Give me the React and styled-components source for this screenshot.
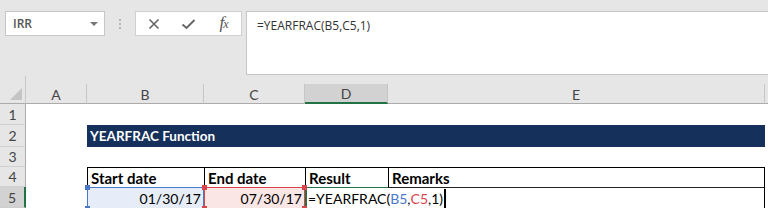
import React from 'react';
import styled, { createGlobalStyle } from 'styled-components';

const GlobalStyle = createGlobalStyle`
  * { box-sizing: border-box; }
  html, body { margin: 0; padding: 0; background: #fff; }
  body { font-family: Lato, "Liberation Sans", sans-serif; }
`;

const Window = styled.div`
  width: 768px;
  height: 208px;
  overflow: hidden;
  background: #e6e6e6;
`;

// ---- formula bar ----
const FormulaBar = styled.div`
  height: 76px;
  display: flex;
  align-items: flex-start;
  padding: 11px 0 0 5px;
  background: #e6e6e6;
`;

const NameBox = styled.div`
  width: 100px;
  height: 25px;
  background: #fff;
  border: 1px solid #c6c6c6;
  display: flex;
  align-items: center;
  justify-content: space-between;
  padding: 0 6px 0 7px;
  font-family: "Open Sans", sans-serif;
  font-size: 12px;
  font-weight: 600;
  color: #555;
`;

const DropArrow = styled.span`
  width: 0;
  height: 0;
  border-left: 4px solid transparent;
  border-right: 4px solid transparent;
  border-top: 4px solid #777;
`;

const Grip = styled.div`
  width: 30px;
  height: 25px;
  display: flex;
  flex-direction: column;
  align-items: center;
  justify-content: center;
  gap: 2px;
`;

const GripDot = styled.span`
  width: 2px;
  height: 2px;
  background: #b4b4b4;
`;

const ButtonGroup = styled.div`
  width: 107px;
  height: 25px;
  background: #fff;
  border: 1px solid #d0d0d0;
  display: flex;
  align-items: center;
  justify-content: space-around;
`;

const IconButton = styled.span`
  width: 16px;
  height: 16px;
  display: flex;
  align-items: center;
  justify-content: center;
  color: #666;
`;

const Fx = styled.span`
  font-family: "Liberation Serif", serif;
  font-style: italic;
  font-size: 17px;
  line-height: 16px;
  color: #555;
  letter-spacing: -1px;

  small {
    font-size: 12px;
  }
`;

const FormulaBox = styled.div`
  flex: 1;
  height: 64px;
  margin-left: 4px;
  background: #fff;
  border: 1px solid #c6c6c6;
  border-right: none;
  padding: 5px 10px;
  font-family: "Open Sans", sans-serif;
  font-size: 12px;
  color: #333;
`;

// ---- sheet ----
const Sheet = styled.div`
  display: grid;
  grid-template-columns: 26px 61px 117px 101px 83px 377px 3px;
  grid-template-rows: 28px 21px 22px 20px 20px 21px;
  background: #fff;
`;

const Corner = styled.div`
  background: #e6e6e6;
  border-bottom: 1px solid #ababab;
  border-right: 1px solid #c8c8c8;
  display: flex;
  align-items: flex-end;
  justify-content: flex-end;
  padding: 0 3px 3px 0;
`;

const ColHead = styled.div`
  background: #e6e6e6;
  padding-top: 8px;
  display: flex;
`;

const ColLabel = styled.div`
  flex: 1;
  display: flex;
  align-items: center;
  justify-content: center;
  background: ${({ $active }) => ($active ? '#d2d2d2' : '#e6e6e6')};
  border-right: ${({ $edge }) => ($edge ? 'none' : '1px solid #c6c6c6')};
  border-bottom: ${({ $active }) => ($active ? '2px solid #217346' : '1px solid #ababab')};
  font-size: 14px;
  color: #444;
  padding-top: 1px;
`;

const RowHead = styled.div`
  background: ${({ $active }) => ($active ? '#d2d2d2' : '#e6e6e6')};
  border-bottom: 1px solid #cfcfcf;
  border-right: ${({ $active }) => ($active ? '2px solid #217346' : '1px solid #ababab')};
  display: flex;
  align-items: center;
  justify-content: center;
  font-size: 14px;
  color: #444;
`;

const Blank = styled.div`
  grid-column: ${({ $span }) => ($span ? `span ${$span}` : 'auto')};
  background: #fff;
`;

const Title = styled.div`
  grid-column: span 4;
  background: #15305a;
  color: #fff;
  font-weight: 700;
  font-size: 13.5px;
  display: flex;
  align-items: center;
  padding-left: 3px;
`;

const HeadCell = styled.div`
  border-top: 1px solid #000;
  border-left: 1px solid #000;
  border-right: ${({ $last }) => ($last ? '1px solid #000' : 'none')};
  display: flex;
  align-items: flex-end;
  padding: 0 0 0 3px;
  font-weight: 700;
  font-size: 15px;
  color: #000;
  line-height: 18px;
`;

const tones = {
  blue: { line: '#4a78c8', fill: '#e6edf8' },
  red: { line: '#d8464c', fill: '#fbe6e6' },
};

const RefCell = styled.div`
  position: relative;
  background: ${({ $tone }) => tones[$tone].fill};
  border: 1px solid ${({ $tone }) => tones[$tone].line};
  border-bottom: none;
  display: flex;
  align-items: center;
  justify-content: flex-end;
  padding-right: 2px;
  font-size: 14px;
  color: #000;
`;

const Handle = styled.span`
  position: absolute;
  width: 5px;
  height: 5px;
  background: ${({ $tone }) => tones[$tone].line};
  ${({ $side }) => ($side === 'left' ? 'left: -3px;' : 'right: -3px;')}
  ${({ $pos }) => ($pos === 'top' ? 'top: -3px;' : 'bottom: -3px;')}
  z-index: 2;
`;

const EditCell = styled.div`
  border-top: 1px solid #217346;
  border-left: 2px solid #217346;
  display: flex;
  align-items: center;
  padding-left: 1px;
  white-space: nowrap;
  overflow: visible;
  font-size: 14px;
  color: #000;
  position: relative;
  z-index: 1;
`;

const Ref = styled.span`
  color: ${({ $tone }) => tones[$tone].line};
`;

const Caret = styled.span`
  flex-shrink: 0;
  display: inline-block;
  width: 2px;
  height: 19px;
  background: #000;
  margin-left: 1px;
`;

const RemarkCell = styled.div`
  border-top: 1px solid #222;
  border-right: 1px solid #000;
`;

const columns = ['A', 'B', 'C', 'D', 'E'];

const CloseIcon = () => (
  <svg width="12" height="12" viewBox="0 0 12 12">
    <path d="M1.5 1.5 L10.5 10.5 M10.5 1.5 L1.5 10.5" stroke="#666" strokeWidth="1.6" fill="none" />
  </svg>
);

const CheckIcon = () => (
  <svg width="15" height="12" viewBox="0 0 15 12">
    <path d="M1.5 6.5 L5.5 10 L13.5 2" stroke="#666" strokeWidth="2" fill="none" />
  </svg>
);

const SelectAll = () => (
  <svg width="12" height="12" viewBox="0 0 12 12">
    <path d="M12 0 L12 12 L0 12 Z" fill="#c4c4c4" />
  </svg>
);

const App = () => (
  <>
    <GlobalStyle />
    <Window>
      <FormulaBar>
        <NameBox>
          IRR
          <DropArrow />
        </NameBox>
        <Grip>
          <GripDot />
          <GripDot />
          <GripDot />
        </Grip>
        <ButtonGroup>
          <IconButton><CloseIcon /></IconButton>
          <IconButton><CheckIcon /></IconButton>
          <IconButton><Fx>f<small>x</small></Fx></IconButton>
        </ButtonGroup>
        <FormulaBox>=YEARFRAC(B5,C5,1)</FormulaBox>
      </FormulaBar>

      <Sheet>
        <Corner><SelectAll /></Corner>
        {columns.map((c) => (
          <ColHead key={c}>
            <ColLabel $active={c === 'D'}>{c}</ColLabel>
          </ColHead>
        ))}
        <ColHead><ColLabel $edge /></ColHead>

        <RowHead>1</RowHead>
        <Blank $span={6} />

        <RowHead>2</RowHead>
        <Blank />
        <Title>YEARFRAC Function</Title>
        <Blank />

        <RowHead>3</RowHead>
        <Blank $span={6} />

        <RowHead>4</RowHead>
        <Blank />
        <HeadCell>Start date</HeadCell>
        <HeadCell>End date</HeadCell>
        <HeadCell>Result</HeadCell>
        <HeadCell $last>Remarks</HeadCell>
        <Blank />

        <RowHead $active>5</RowHead>
        <Blank />
        <RefCell $tone="blue">
          01/30/17
          <Handle $tone="blue" $side="left" $pos="top" />
          <Handle $tone="blue" $side="left" $pos="bottom" />
        </RefCell>
        <RefCell $tone="red">
          07/30/17
          <Handle $tone="red" $side="left" $pos="top" />
          <Handle $tone="red" $side="right" $pos="top" />
          <Handle $tone="red" $side="left" $pos="bottom" />
          <Handle $tone="red" $side="right" $pos="bottom" />
        </RefCell>
        <EditCell>
          =YEARFRAC(<Ref $tone="blue">B5</Ref>,<Ref $tone="red">C5</Ref>,1)
          <Caret />
        </EditCell>
        <RemarkCell />
        <Blank />
      </Sheet>
    </Window>
  </>
);

export default App;
